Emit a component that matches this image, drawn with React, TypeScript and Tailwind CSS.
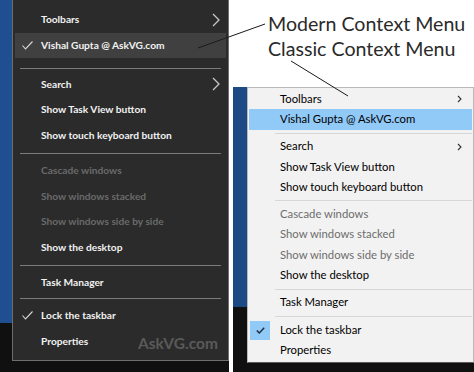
import React from 'react';

interface MenuEntry {
  label?: string;
  sep?: boolean;
  disabled?: boolean;
  checked?: boolean;
  sub?: boolean;
  hover?: boolean;
}

const entries: MenuEntry[] = [
  { label: 'Toolbars', sub: true },
  { label: 'Vishal Gupta @ AskVG.com', hover: true },
  { sep: true },
  { label: 'Search', sub: true },
  { label: 'Show Task View button' },
  { label: 'Show touch keyboard button' },
  { sep: true },
  { label: 'Cascade windows', disabled: true },
  { label: 'Show windows stacked', disabled: true },
  { label: 'Show windows side by side', disabled: true },
  { label: 'Show the desktop' },
  { sep: true },
  { label: 'Task Manager' },
  { sep: true },
  { label: 'Lock the taskbar', checked: true },
  { label: 'Properties' },
];

// separator blocks in the dark menu are not all the same height
const darkSepClass = ['h-[13.5px] pt-[10px]', 'h-[10px] pt-[4.5px]', 'h-[10px] pt-[4.5px]', 'h-[7.5px] pt-[2.5px]'];

const DarkChevron = () => (
  <svg width="8" height="14" viewBox="0 0 8 14" fill="none">
    <path d="M1 1 L7 7 L1 13" stroke="#c8c8c8" strokeWidth="1.3" />
  </svg>
);

const DarkCheck = () => (
  <svg width="11" height="9" viewBox="0 0 11 9" fill="none">
    <path d="M0.5 4.5 L3.5 8 L10.5 0.5" stroke="#d8d8d8" strokeWidth="1.1" />
  </svg>
);

const ModernMenu = () => {
  let sepIndex = 0;
  return (
    <div className="relative ml-[12px] w-[217px] h-[361px] bg-[#2b2b2b] border-x border-b border-[#6e6e6e] pt-[7px] font-['Lato',sans-serif] text-[10.2px] font-bold">
      {entries.map((e, i) => {
        if (e.sep) {
          const cls = darkSepClass[sepIndex++];
          return (
            <div key={i} className={cls}>
              <div className="mx-[7px] h-px bg-[#7b7b7b]" />
            </div>
          );
        }
        return (
          <div
            key={i}
            className={
              'mx-[2px] h-[25.5px] flex items-center pr-[6px] ' +
              (e.hover ? 'bg-[#404040] ' : '') +
              (e.disabled ? 'text-[#6a6a6a]' : 'text-[#f2f2f2]')
            }
          >
            <div className="w-[26px] pl-[7px] flex items-center">
              {(e.checked || e.hover) && <DarkCheck />}
            </div>
            <span className="flex-1">{e.label}</span>
            {e.sub && <DarkChevron />}
          </div>
        );
      })}
      <div className="absolute left-[125px] top-[336px] leading-none text-[15.5px] font-bold text-[#5a5a5a] whitespace-nowrap">
        AskVG.com
      </div>
    </div>
  );
};

const ClassicChevron = () => (
  <svg width="5" height="8" viewBox="0 0 5 8" fill="none">
    <path d="M1 1 L4 4 L1 7" stroke="#333" strokeWidth="1.1" />
  </svg>
);

const ClassicMenu = () => (
  <div className="ml-[14px] w-[227px] h-[276px] bg-[#f2f2f2] border border-[#b9b9b9] border-b-[#5a5a5a] py-px font-['Lato',sans-serif] text-[11.3px]">
    {entries.map((e, i) => {
      if (e.sep) {
        return (
          <div key={i} className="h-[7px] flex items-center pl-[27px] pr-px">
            <div className="flex-1 h-px bg-[#d7d7d7]" />
          </div>
        );
      }
      return (
        <div
          key={i}
          className={
            'mx-px h-[20.3px] flex items-center pr-[10px] ' +
            (e.hover ? 'bg-[#91c9f7] ' : '') +
            (e.disabled ? 'text-[#6d6d6d]' : 'text-black')
          }
        >
          <div className="w-[31px] flex items-center">
            {e.checked && (
              <div className="ml-px w-[20px] h-[19px] bg-[#91c9f7] flex items-center justify-center">
                <svg width="9" height="7" viewBox="0 0 9 7" fill="none">
                  <path d="M0.8 3.5 L3.3 6 L8.2 0.8" stroke="#1c2a3c" strokeWidth="1.4" />
                </svg>
              </div>
            )}
          </div>
          <span className="flex-1">{e.label}</span>
          {e.sub && <ClassicChevron />}
        </div>
      );
    })}
  </div>
);

export default function App() {
  return (
    <div className="relative w-[474px] h-[372px] flex bg-white overflow-hidden">
      <div className="w-[229px] h-full bg-[linear-gradient(#1f4f90_323px,#101010_323px)]">
        <ModernMenu />
      </div>
      <div className="w-[4px] h-full bg-white" />
      <div className="flex-1 flex flex-col">
        <div className="h-[87px] bg-white pl-[35px] pt-[11px] font-['Lato',sans-serif] text-[19.6px] leading-[25px] text-[#2a2a2a] whitespace-nowrap">
          <div>Modern Context Menu</div>
          <div>Classic Context Menu</div>
        </div>
        <div className="flex-1 bg-[linear-gradient(#1d4a85_220px,#101010_220px)]">
          <ClassicMenu />
        </div>
      </div>
      <svg className="absolute inset-0 pointer-events-none" width="474" height="372">
        <line x1="265" y1="24" x2="198" y2="48" stroke="#1a1a1a" strokeWidth="1" />
        <line x1="291" y1="61" x2="348" y2="96" stroke="#1a1a1a" strokeWidth="1" />
      </svg>
    </div>
  );
}
